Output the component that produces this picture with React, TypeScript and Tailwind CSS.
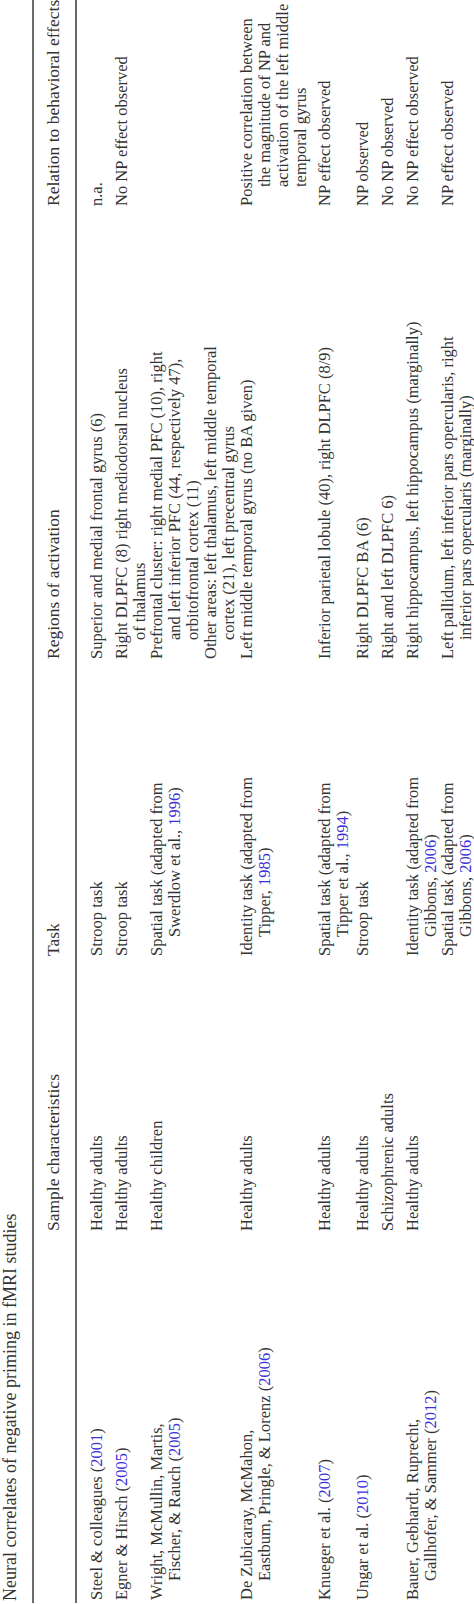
import React from "react";

const Y = ({ children }: { children: React.ReactNode }) => (
  <span className="text-[#3b30d8]">{children}</span>
);

type Para = React.ReactNode[];
type Cell = Para[];

function CellView({ cell }: { cell: Cell }) {
  return (
    <div className="flex flex-col">
      {cell.map((para, pi) => (
        <div key={pi} className="flex flex-col">
          {para.map((ln, i) => (
            <div key={i} className={i === 0 ? "whitespace-nowrap" : "whitespace-nowrap pl-[19px]"}>
              {ln}
            </div>
          ))}
        </div>
      ))}
    </div>
  );
}

type RowDef = { mt: string; cells: Cell[] };

const rows: RowDef[] = [
  {
    mt: "mt-[11px]",
    cells: [
      [[<>Steel &amp; colleagues (<Y>2001</Y>)</>]],
      [["Healthy adults"]],
      [["Stroop task"]],
      [["Superior and medial frontal gyrus (6)"]],
      [["n.a."]],
    ],
  },
  {
    mt: "mt-[7px]",
    cells: [
      [[<>Egner &amp; Hirsch (<Y>2005</Y>)</>]],
      [["Healthy adults"]],
      [["Stroop task"]],
      [["Right DLPFC (8) right mediodorsal nucleus", "of thalamus"]],
      [["No NP effect observed"]],
    ],
  },
  {
    mt: "-mt-px",
    cells: [
      [["Wright, McMullin, Martis,", <>Fischer, &amp; Rauch (<Y>2005</Y>)</>]],
      [["Healthy children"]],
      [["Spatial task (adapted from", <>Swerdlow et al., <Y>1996</Y>)</>]],
      [
        [
          "Prefrontal cluster: right medial PFC (10), right",
          "and left inferior PFC (44, respectively 47),",
          "orbitofrontal cortex (11)",
        ],
        ["Other areas: left thalamus, left middle temporal", "cortex (21), left precentral gyrus"],
      ],
      [],
    ],
  },
  {
    mt: "mt-0",
    cells: [
      [["De Zubicaray, McMahon,", <>Eastbum, Pringle, &amp; Lorenz (<Y>2006</Y>)</>]],
      [["Healthy adults"]],
      [["Identity task (adapted from", <>Tipper, <Y>1985</Y>)</>]],
      [["Left middle temporal gyrus (no BA given)"]],
      [
        [
          "Positive correlation between",
          "the magnitude of NP and",
          "activation of the left middle",
          "temporal gyrus",
        ],
      ],
    ],
  },
  {
    mt: "mt-[6px]",
    cells: [
      [[<>Knueger et al. (<Y>2007</Y>)</>]],
      [["Healthy adults"]],
      [["Spatial task (adapted from", <>Tipper et al., <Y>1994</Y>)</>]],
      [["Inferior parietal lobule (40), right DLPFC (8/9)"]],
      [["NP effect observed"]],
    ],
  },
  {
    mt: "mt-[2.5px]",
    cells: [
      [[<>Ungar et al. (<Y>2010</Y>)</>]],
      [["Healthy adults"]],
      [["Stroop task"]],
      [["Right DLPFC BA (6)"]],
      [["NP observed"]],
    ],
  },
  {
    mt: "mt-[7px]",
    cells: [[], [["Schizophrenic adults"]], [], [["Right and left DLPFC 6)"]], [["No NP observed"]]],
  },
  {
    mt: "mt-[7px]",
    cells: [
      [["Bauer, Gebhardt, Ruprecht,", <>Gallhofer, &amp; Sammer (<Y>2012</Y>)</>]],
      [["Healthy adults"]],
      [["Identity task (adapted from", <>Gibbons, <Y>2006</Y>)</>]],
      [["Right hippocampus, left hippocampus (marginally)"]],
      [["No NP effect observed"]],
    ],
  },
  {
    mt: "-mt-px",
    cells: [
      [],
      [],
      [["Spatial task (adapted from", <>Gibbons, <Y>2006</Y>)</>]],
      [["Left pallidum, left inferior pars opercularis, right", "inferior pars opercularis (marginally)"]],
      [["NP effect observed"]],
    ],
  },
];

const gridCols = "grid grid-cols-[369px_275px_297px_453px_220px] pl-[3px]";

export default function App() {
  return (
    <div className="w-[474px] h-[1604px] overflow-hidden bg-white">
      <div className="w-[1604px] h-[474px] origin-top-left -rotate-90 translate-y-[1604px] bg-white font-['Liberation_Serif',serif] text-[16.5px] leading-[18px] text-[#333333]">
        <div className="-mt-[1.5px] pl-[2px] whitespace-nowrap text-[18px] leading-[20px]">
          Neural correlates of negative priming in fMRI studies
        </div>
        <div className="mt-[12px] h-[1.5px] bg-[#6a6a6a]" />
        <div className={`${gridCols} pt-[9px] pb-[12.5px] text-[17.5px] leading-[20px]`}>
          <div />
          <div className="whitespace-nowrap">Sample characteristics</div>
          <div className="whitespace-nowrap">Task</div>
          <div className="whitespace-nowrap">Regions of activation</div>
          <div className="whitespace-nowrap">Relation to behavioral effects</div>
        </div>
        <div className="h-[1.5px] bg-[#6a6a6a]" />
        {rows.map((r, ri) => (
          <div key={ri} className={`${gridCols} ${r.mt}`}>
            {r.cells.map((c, ci) => (
              <CellView key={ci} cell={c} />
            ))}
          </div>
        ))}
      </div>
    </div>
  );
}
